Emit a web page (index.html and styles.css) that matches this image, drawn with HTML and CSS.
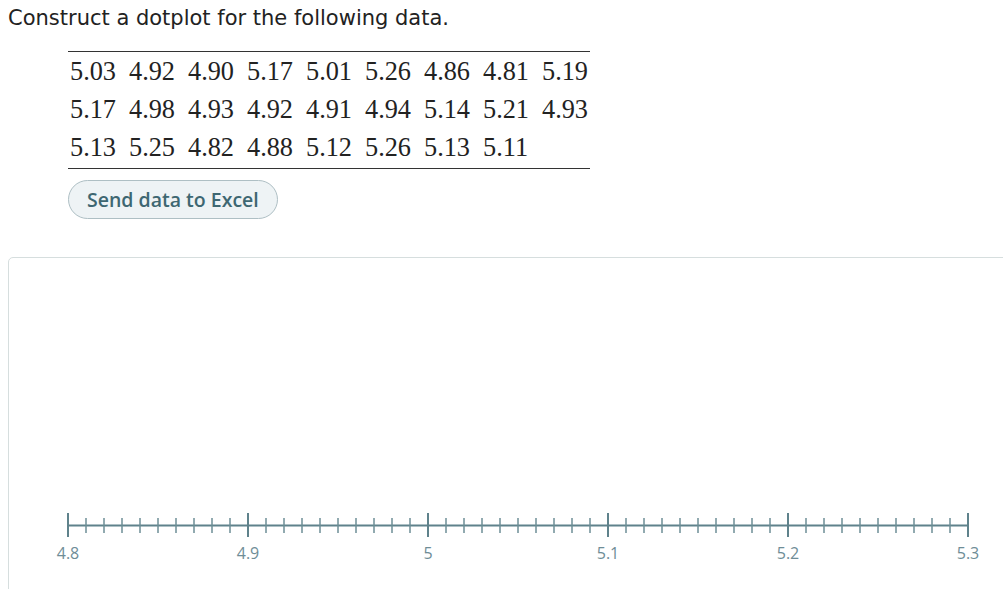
FILE: index.html
```html
<!DOCTYPE html>
<html>
<head>
<meta charset="utf-8">
<link rel="stylesheet" href="styles.css">
</head>
<body>
<div class="page">
  <p class="prompt">Construct a dotplot for the following data.</p>
  <div class="data">
    <span>5.03</span><span>4.92</span><span>4.90</span><span>5.17</span><span>5.01</span><span>5.26</span><span>4.86</span><span>4.81</span><span>5.19</span>
    <span>5.17</span><span>4.98</span><span>4.93</span><span>4.92</span><span>4.91</span><span>4.94</span><span>5.14</span><span>5.21</span><span>4.93</span>
    <span>5.13</span><span>5.25</span><span>4.82</span><span>4.88</span><span>5.12</span><span>5.26</span><span>5.13</span><span>5.11</span><span></span>
  </div>
  <button class="excel-btn">Send data to Excel</button>
  <div class="plot-panel">
    <svg class="axis" width="990" height="80" viewBox="9 500 990 80">
      <line class="axis-line" x1="68" y1="525.5" x2="968" y2="525.5"/>
      <path class="minor" d="M86 518V533M104 518V533M122 518V533M140 518V533M158 518V533M176 518V533M194 518V533M212 518V533M230 518V533M266 518V533M284 518V533M302 518V533M320 518V533M338 518V533M356 518V533M374 518V533M392 518V533M410 518V533M446 518V533M464 518V533M482 518V533M500 518V533M518 518V533M536 518V533M554 518V533M572 518V533M590 518V533M626 518V533M644 518V533M662 518V533M680 518V533M698 518V533M716 518V533M734 518V533M752 518V533M770 518V533M806 518V533M824 518V533M842 518V533M860 518V533M878 518V533M896 518V533M914 518V533M932 518V533M950 518V533"/>
      <path class="major" d="M68 513V537M248 513V537M428 513V537M608 513V537M788 513V537M968 513V537"/>
      <text class="label" x="68" y="559">4.8</text>
      <text class="label" x="248" y="559">4.9</text>
      <text class="label" x="428" y="559">5</text>
      <text class="label" x="608" y="559">5.1</text>
      <text class="label" x="788" y="559">5.2</text>
      <text class="label" x="968" y="559">5.3</text>
    </svg>
  </div>
</div>
</body>
</html>
```

FILE: styles.css
```css
html, body {
  margin: 0;
  padding: 0;
  background: #ffffff;
  overflow: hidden;
}
.page {
  padding: 5px 0 0 8px;
}
.prompt {
  margin: 0;
  font-family: "DejaVu Sans", Verdana, sans-serif;
  font-size: 21px;
  line-height: 26px;
  color: #222222;
}
.data {
  margin: 20px 0 0 60px;
  width: 522px;
  display: grid;
  grid-template-columns: repeat(8, 59px) 50px;
  grid-auto-rows: 38px;
  align-items: center;
  border-top: 1px solid #333333;
  border-bottom: 1px solid #333333;
  padding: 1px 0 1px 0;
  font-family: "Liberation Serif", "Times New Roman", serif;
  font-size: 26.3px;
  color: #222222;
}
.data span {
  padding-left: 2px;
  white-space: nowrap;
}
.excel-btn {
  display: block;
  margin: 11px 0 0 60px;
  height: 39px;
  padding: 0 18px;
  border: 1px solid #aebfc4;
  border-radius: 20px;
  background: #eef3f5;
  color: #3e6772;
  font-family: "Open Sans", Lato, sans-serif;
  font-weight: 600;
  font-size: 19.5px;
}
.plot-panel {
  margin-top: 38px;
  margin-right: -20px;
  height: 400px;
  border: 1px solid #d6dede;
  border-radius: 5px;
}
.axis {
  display: block;
  margin-top: 242px;
}
.axis-line {
  stroke: #5f828b;
  stroke-width: 2;
}
.minor {
  stroke: #6d8e97;
  stroke-width: 1.5;
}
.major {
  stroke: #5f828b;
  stroke-width: 2;
}
.label {
  font-family: "Open Sans", Lato, sans-serif;
  font-size: 16px;
  fill: #6f8d97;
  text-anchor: middle;
}
```
